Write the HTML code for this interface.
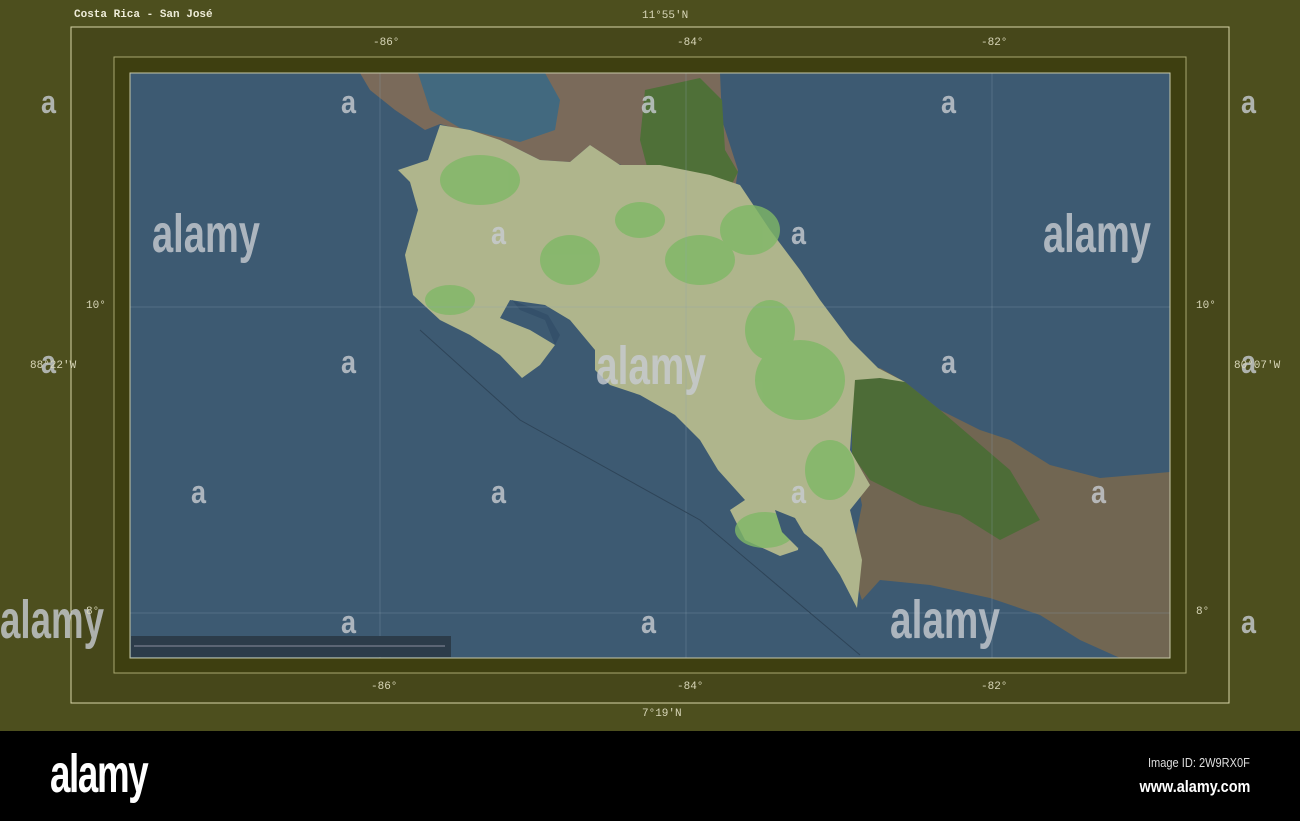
<!DOCTYPE html>
<html><head><meta charset="utf-8"><style>
*{margin:0;padding:0}
body{width:1300px;height:821px;overflow:hidden;background:#4d4f1e;position:relative;font-family:"Liberation Mono",monospace}
.t{position:absolute;color:#d8d6b8;font-size:11px;white-space:nowrap}
.w{font-family:"Liberation Sans",sans-serif;font-weight:bold;fill:#c8ccd2;opacity:.8}
</style></head><body>
<svg width="1300" height="821" style="position:absolute;left:0;top:0">
<rect x="71" y="27" width="1158" height="676" fill="#46471a" stroke="#d8d6a8" stroke-width="1"/>
<rect x="114" y="57" width="1072" height="616" fill="#3e3f10" stroke="#a8a770" stroke-width="1"/>
<rect x="130" y="73" width="1040" height="585" fill="#3d5a72"/>
<clipPath id="c"><rect x="130" y="73" width="1040" height="585"/></clipPath>
<g clip-path="url(#c)">
<path d="M360 73 L720 73 L722 120 L738 170 L735 190 L705 198 L680 190 L650 178 L610 160 L590 145 L570 162 L540 160 L500 140 L440 124 L425 130 L395 110 L370 90Z" fill="#7a6a5a"/>
<path d="M418 73 L545 73 L560 100 L555 130 L520 142 L460 128 L430 110Z" fill="#42697f"/>
<path d="M645 90 L700 78 L722 100 L725 150 L738 172 L728 192 L705 198 L680 190 L650 178 L640 140Z" fill="#4f7038"/>
<path d="M852 378 L880 368 L905 382 L940 410 L980 430 L1010 440 L1050 465 L1100 478 L1170 472 L1170 658 L1120 658 L1080 640 L1040 615 L990 598 L930 585 L880 580 L862 600 L850 565 L862 505 L852 455Z" fill="#716652"/>
<path d="M852 380 L880 370 L905 382 L940 410 L975 440 L1010 470 L1040 520 L1000 540 L960 515 L920 505 L870 480 L852 455Z" fill="#4d6c37"/>
<path d="M398 170 L428 160 L440 125 L470 130 L500 140 L540 160 L570 162 L590 145 L620 165 L660 165 L710 175 L740 185 L770 230 L800 270 L820 300 L850 340 L878 368 L905 382 L880 378 L855 380 L850 450 L870 485 L850 510 L862 560 L857 608 L840 575 L822 548 L800 530 L798 550 L780 556 L745 540 L730 510 L745 500 L718 470 L700 440 L675 415 L640 395 L610 385 L595 370 L595 350 L570 320 L545 305 L510 300 L500 318 L530 330 L555 345 L540 365 L522 378 L500 355 L470 335 L440 320 L413 295 L405 255 L418 210 L410 182Z" fill="#afb58c"/>
<g fill="#7fb866" opacity=".8">
<ellipse cx="480" cy="180" rx="40" ry="25"/><ellipse cx="570" cy="260" rx="30" ry="25"/>
<ellipse cx="640" cy="220" rx="25" ry="18"/><ellipse cx="770" cy="330" rx="25" ry="30"/>
<ellipse cx="800" cy="380" rx="45" ry="40"/><ellipse cx="700" cy="260" rx="35" ry="25"/>
<ellipse cx="765" cy="530" rx="30" ry="18"/><ellipse cx="830" cy="470" rx="25" ry="30"/>
<ellipse cx="450" cy="300" rx="25" ry="15"/><ellipse cx="750" cy="230" rx="30" ry="25"/>
</g>
<path d="M512 300 L520 310 L545 320 L555 345 L560 335 L548 315Z" fill="#34506a"/>
<path d="M775 510 L795 518 L805 535 L798 548 L782 532Z" fill="#3d5a72"/>
<line x1="380" y1="73" x2="380" y2="658" stroke="#8aa0b0" stroke-width=".5" opacity=".6"/>
<line x1="686" y1="73" x2="686" y2="658" stroke="#8aa0b0" stroke-width=".5" opacity=".6"/>
<line x1="992" y1="73" x2="992" y2="658" stroke="#8aa0b0" stroke-width=".5" opacity=".6"/>
<line x1="130" y1="307" x2="1170" y2="307" stroke="#8aa0b0" stroke-width=".5" opacity=".6"/>
<line x1="130" y1="613" x2="1170" y2="613" stroke="#8aa0b0" stroke-width=".5" opacity=".6"/>
<path d="M420 330 L520 420 L700 520 L860 655" stroke="#2e4458" fill="none"/>
</g>
<rect x="130" y="73" width="1040" height="585" fill="none" stroke="#c8c8a8" stroke-width="1"/>
<rect x="131" y="636" width="320" height="21" fill="#2c3c4a"/>
<line x1="134" y1="646" x2="445" y2="646" stroke="#aab" stroke-width=".7"/>
<g class="w" font-size="54">
<text x="152" y="252" textLength="108" lengthAdjust="spacingAndGlyphs">alamy</text>
<text x="1043" y="252" textLength="108" lengthAdjust="spacingAndGlyphs">alamy</text>
<text x="596" y="384" textLength="110" lengthAdjust="spacingAndGlyphs">alamy</text>
<text x="890" y="638" textLength="110" lengthAdjust="spacingAndGlyphs">alamy</text>
<text x="0" y="638" textLength="104" lengthAdjust="spacingAndGlyphs">alamy</text>
</g>
<g class="w" font-size="32">
<text x="41" y="113" textLength="15" lengthAdjust="spacingAndGlyphs">a</text><text x="341" y="113" textLength="15" lengthAdjust="spacingAndGlyphs">a</text><text x="641" y="113" textLength="15" lengthAdjust="spacingAndGlyphs">a</text><text x="941" y="113" textLength="15" lengthAdjust="spacingAndGlyphs">a</text><text x="1241" y="113" textLength="15" lengthAdjust="spacingAndGlyphs">a</text>
<text x="491" y="244" textLength="15" lengthAdjust="spacingAndGlyphs">a</text><text x="791" y="244" textLength="15" lengthAdjust="spacingAndGlyphs">a</text>
<text x="41" y="373" textLength="15" lengthAdjust="spacingAndGlyphs">a</text><text x="341" y="373" textLength="15" lengthAdjust="spacingAndGlyphs">a</text><text x="941" y="373" textLength="15" lengthAdjust="spacingAndGlyphs">a</text><text x="1241" y="373" textLength="15" lengthAdjust="spacingAndGlyphs">a</text>
<text x="191" y="503" textLength="15" lengthAdjust="spacingAndGlyphs">a</text><text x="491" y="503" textLength="15" lengthAdjust="spacingAndGlyphs">a</text><text x="791" y="503" textLength="15" lengthAdjust="spacingAndGlyphs">a</text><text x="1091" y="503" textLength="15" lengthAdjust="spacingAndGlyphs">a</text>
<text x="341" y="633" textLength="15" lengthAdjust="spacingAndGlyphs">a</text><text x="641" y="633" textLength="15" lengthAdjust="spacingAndGlyphs">a</text><text x="1241" y="633" textLength="15" lengthAdjust="spacingAndGlyphs">a</text>
</g>
</svg>
<div class="t" style="left:74px;top:9px;font-weight:bold;color:#eeecd8">Costa Rica - San José</div>
<div class="t" style="left:642px;top:10px">11°55′N</div>
<div class="t" style="left:642px;top:708px">7°19′N</div>
<div class="t" style="left:373px;top:37px">-86°</div><div class="t" style="left:677px;top:37px">-84°</div><div class="t" style="left:981px;top:37px">-82°</div>
<div class="t" style="left:371px;top:681px">-86°</div><div class="t" style="left:677px;top:681px">-84°</div><div class="t" style="left:981px;top:681px">-82°</div>
<div class="t" style="left:86px;top:300px">10°</div><div class="t" style="left:1196px;top:300px">10°</div>
<div class="t" style="left:86px;top:606px">8°</div><div class="t" style="left:1196px;top:606px">8°</div>
<div class="t" style="left:30px;top:360px">88°22′W</div><div class="t" style="left:1234px;top:360px">80°07′W</div>
<div style="position:absolute;left:0;top:731px;width:1300px;height:90px;background:#000"></div>
<div style="position:absolute;left:50px;top:744px;color:#fff;font-family:'Liberation Sans',sans-serif;font-weight:bold;font-size:54px;transform:scaleX(.68);transform-origin:left;letter-spacing:-2px;line-height:60px">alamy</div>
<div style="position:absolute;right:50px;top:755px;color:#ddd;font-family:'Liberation Sans',sans-serif;font-size:13px;transform:scaleX(.85);transform-origin:right">Image ID: 2W9RX0F</div>
<div style="position:absolute;right:50px;top:777px;color:#fff;font-family:'Liberation Sans',sans-serif;font-weight:bold;font-size:17px;transform:scaleX(.85);transform-origin:right">www.alamy.com</div>
</body></html>
